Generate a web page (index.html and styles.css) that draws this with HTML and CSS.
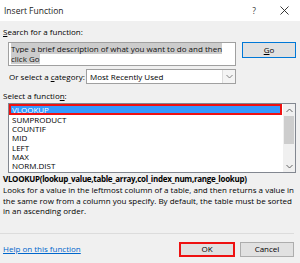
FILE: index.html
```html
<!DOCTYPE html>
<html lang="en">
<head>
  <meta charset="UTF-8" />
  <title>Insert Function</title>
  <link rel="stylesheet" href="styles.css">
</head>
<body>

  <!-- Window title bar -->
  <header class="titlebar">
    <span class="title">Insert Function</span>
    <span class="title-help">?</span>
    <svg class="title-close" width="9" height="9" viewBox="0 0 9 9">
      <path d="M0.5 0.5 L8.5 8.5 M8.5 0.5 L0.5 8.5" stroke="#222" stroke-width="0.9" fill="none"/>
    </svg>
  </header>

  <main class="dialog">
    <!-- Search -->
    <div class="label"><u>S</u>earch for a function:</div>
    <div class="search-row">
      <div class="search-box"><span class="selected-text">Type a brief description of what you want to do and then click Go</span></div>
      <button class="btn btn-default"><u>G</u>o</button>
    </div>

    <!-- Category -->
    <div class="category-row">
      <span class="category-label">Or select a <u>c</u>ategory:</span>
      <div class="select">
        <span class="select-value">Most Recently Used</span>
        <span class="select-arrow">
          <svg width="7" height="5" viewBox="0 0 7 5"><path d="M0.5 1 L3.5 4 L6.5 1" stroke="#777" stroke-width="0.9" fill="none"/></svg>
        </span>
      </div>
    </div>

    <!-- Function list -->
    <div class="label list-label">Select a functio<u>n</u>:</div>
    <div class="listbox">
      <ul class="items">
        <li class="item selected">VLOOKUP</li>
        <li class="item">SUMPRODUCT</li>
        <li class="item">COUNTIF</li>
        <li class="item">MID</li>
        <li class="item">LEFT</li>
        <li class="item">MAX</li>
        <li class="item">NORM.DIST</li>
      </ul>
      <div class="scrollbar">
        <svg width="7" height="5" viewBox="0 0 7 5"><path d="M0.5 4 L3.5 1 L6.5 4" stroke="#555" stroke-width="0.9" fill="none"/></svg>
        <div class="thumb"></div>
        <div class="track"></div>
        <svg width="7" height="5" viewBox="0 0 7 5"><path d="M0.5 1 L3.5 4 L6.5 1" stroke="#555" stroke-width="0.9" fill="none"/></svg>
      </div>
    </div>

    <!-- Description of the selected function -->
    <div class="signature">VLOOKUP(lookup_value,table_array,col_index_num,range_lookup)</div>
    <p class="description">Looks for a value in the leftmost column of a table, and then returns a value in the same row from a column you specify. By default, the table must be sorted in an ascending order.</p>
  </main>

  <!-- Bottom buttons -->
  <footer class="footer">
    <a href="#" class="help-link">Help on this function</a>
    <button class="btn btn-ok">OK</button>
    <button class="btn btn-cancel">Cancel</button>
  </footer>

</body>
</html>
```

FILE: styles.css
```css
/* Dialog window */
body {
  margin: 0;
  width: 300px;
  height: 263px;
  overflow: hidden;
  background-color: #f0f0f0;
  color: #000;
  font-family: "Open Sans", "Noto Sans", sans-serif;
  font-size: 8px;
  line-height: 10px;
  display: flex;
  flex-direction: column;
}

u {
  text-decoration: underline;
  text-underline-offset: 1px;
}

/* Title bar */
.titlebar {
  background-color: white;
  height: 21px;
  display: flex;
  align-items: center;
  padding: 0 11px 0 4px;
  font-size: 8.5px;
}

.title {
  flex: 1;
  color: #222;
}

.title-help {
  color: #333;
  margin-right: 24px;
}

/* Main area */
.dialog {
  padding: 6px 4px 0 3px;
  flex: 1;
}

.label {
  height: 10px;
}

.search-row {
  display: flex;
  gap: 6px;
  margin-top: 5px;
}

.search-box {
  flex: 1;
  height: 21px;
  background-color: white;
  border: 1px solid #a0a0a0;
  margin-left: 5px;
  padding: 1px 0 0 2px;
  line-height: 10px;
}

.selected-text {
  background-color: #cccccc;
  color: #111;
}

.btn {
  font-family: inherit;
  font-size: 8px;
  line-height: 10px;
  background-color: #e1e1e1;
  border: 1px solid #adadad;
  padding: 0;
  color: #000;
}

.btn-default {
  width: 54px;
  height: 16px;
  border-color: #0078d7;
}

/* Category */
.category-row {
  display: flex;
  align-items: center;
  margin-top: 3px;
  height: 15px;
}

.category-label {
  width: 77px;
  padding-left: 6px;
}

.select {
  display: flex;
  width: 148px;
  height: 13px;
  background-color: white;
  border: 1px solid #a0a0a0;
}

.select-value {
  flex: 1;
  padding-left: 3px;
  line-height: 13px;
}

.select-arrow {
  width: 12px;
  border-left: 1px solid #dcdcdc;
  background-color: #f4f4f4;
  display: flex;
  align-items: center;
  justify-content: center;
}

/* Function list */
.list-label {
  margin-top: 7px;
}

.listbox {
  display: flex;
  height: 68px;
  margin: 2px 0 0 5px;
  background-color: white;
  border: 1px solid #828790;
  overflow: hidden;
}

.items {
  list-style: none;
  margin: 0;
  padding: 0;
  flex: 1;
}

.item {
  height: 9.2px;
  line-height: 9.2px;
  padding-left: 3px;
}

.item.selected {
  background-color: #3399ff;
  color: white;
  border: 2px solid #ee1111;
  height: 7px;
  line-height: 7px;
  padding-left: 1px;
  margin-right: 1px;
}

.scrollbar {
  width: 12px;
  background-color: #f0f0f0;
  display: flex;
  flex-direction: column;
  align-items: center;
  padding: 4px 0 3px;
}

.thumb {
  width: 10px;
  height: 28px;
  margin-top: 3px;
  background-color: #cdcdcd;
}

.track {
  flex: 1;
}

.signature {
  font-weight: bold;
  letter-spacing: -0.3px;
  margin-top: 1px;
  height: 10px;
}

.description {
  margin: 1px 0 0;
  line-height: 10.5px;
}

/* Footer with buttons */
.footer {
  border-top: 1px solid #dcdcdc;
  margin-right: 6px;
  height: 28px;
  display: flex;
  align-items: center;
  padding-left: 3px;
  padding-top: 1px;
}

.help-link {
  flex: 1;
  color: #0066cc;
  text-decoration: underline;
}

.btn-ok {
  width: 56px;
  height: 15px;
  border: 2px solid #ee1111;
}

.btn-cancel {
  width: 54px;
  height: 15px;
  margin-left: 5px;
}
```
